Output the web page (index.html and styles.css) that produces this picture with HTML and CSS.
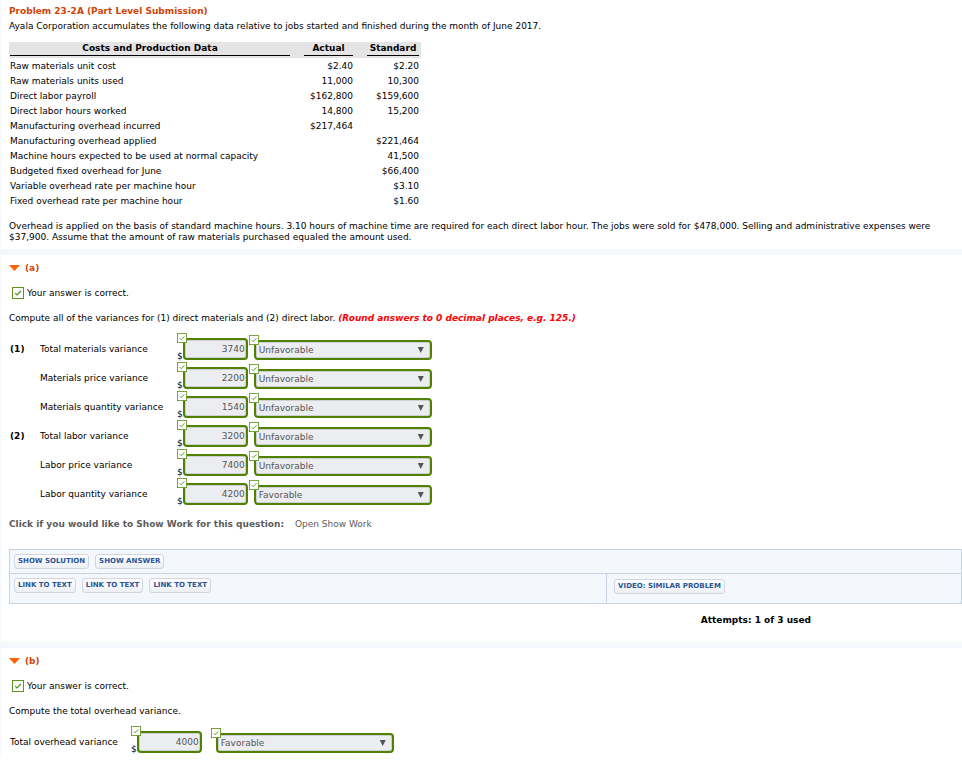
FILE: index.html
```html
<!DOCTYPE html>
<html lang="en">

<head>
    <meta charset="UTF-8">
    <meta name="viewport" content="width=device-width, initial-scale=1.0">
    <title>Problem 23-2A</title>
    <link rel="stylesheet" href="styles.css">
</head>

<body>
    <svg class="sprite" aria-hidden="true">
        <symbol id="check" viewBox="0 0 12 12">
            <rect x="0.5" y="0.5" width="11" height="11" fill="#fff" stroke="#5f9420" />
            <path d="M3.2 6.2 L5 8 L9 4" fill="none" stroke="#4f8f14" stroke-width="1.1" />
        </symbol>
    </svg>

    <section class="problem">
        <h1>Problem 23-2A (Part Level Submission)</h1>
        <p>Ayala Corporation accumulates the following data relative to jobs started and finished during the month of June 2017.</p>

        <table class="costs">
            <thead>
                <tr>
                    <th><span>Costs and Production Data</span></th>
                    <th><span>Actual</span></th>
                    <th><span>Standard</span></th>
                </tr>
            </thead>
            <tbody>
                <tr><td>Raw materials unit cost</td><td>$2.40</td><td>$2.20</td></tr>
                <tr><td>Raw materials units used</td><td>11,000</td><td>10,300</td></tr>
                <tr><td>Direct labor payroll</td><td>$162,800</td><td>$159,600</td></tr>
                <tr><td>Direct labor hours worked</td><td>14,800</td><td>15,200</td></tr>
                <tr><td>Manufacturing overhead incurred</td><td>$217,464</td><td></td></tr>
                <tr><td>Manufacturing overhead applied</td><td></td><td>$221,464</td></tr>
                <tr><td>Machine hours expected to be used at normal capacity</td><td></td><td>41,500</td></tr>
                <tr><td>Budgeted fixed overhead for June</td><td></td><td>$66,400</td></tr>
                <tr><td>Variable overhead rate per machine hour</td><td></td><td>$3.10</td></tr>
                <tr><td>Fixed overhead rate per machine hour</td><td></td><td>$1.60</td></tr>
            </tbody>
        </table>

        <p class="details">Overhead is applied on the basis of standard machine hours. 3.10 hours of machine time are required for each direct labor hour. The jobs were sold for $478,000. Selling and administrative expenses were $37,900. Assume that the amount of raw materials purchased equaled the amount used.</p>
    </section>

    <section class="part">
        <h2><span class="arrow"></span>(a)</h2>
        <p class="status"><svg class="check-big"><use href="#check" /></svg>Your answer is correct.</p>
        <p class="question">Compute all of the variances for (1) direct materials and (2) direct labor. <em>(Round answers to 0 decimal places, e.g. 125.)</em></p>

        <div class="answers">
            <div class="row">
                <b class="num">(1)</b>
                <label class="name" for="a1">Total materials variance</label>
                <span class="amount">$<input type="text" id="a1" value="3740"><svg class="check"><use href="#check" /></svg></span>
                <span class="choice"><select aria-label="Total materials variance type"><option selected>Unfavorable</option><option>Favorable</option></select><svg class="check"><use href="#check" /></svg></span>
            </div>
            <div class="row">
                <b class="num"></b>
                <label class="name" for="a2">Materials price variance</label>
                <span class="amount">$<input type="text" id="a2" value="2200"><svg class="check"><use href="#check" /></svg></span>
                <span class="choice"><select aria-label="Materials price variance type"><option selected>Unfavorable</option><option>Favorable</option></select><svg class="check"><use href="#check" /></svg></span>
            </div>
            <div class="row">
                <b class="num"></b>
                <label class="name" for="a3">Materials quantity variance</label>
                <span class="amount">$<input type="text" id="a3" value="1540"><svg class="check"><use href="#check" /></svg></span>
                <span class="choice"><select aria-label="Materials quantity variance type"><option selected>Unfavorable</option><option>Favorable</option></select><svg class="check"><use href="#check" /></svg></span>
            </div>
            <div class="row">
                <b class="num">(2)</b>
                <label class="name" for="a4">Total labor variance</label>
                <span class="amount">$<input type="text" id="a4" value="3200"><svg class="check"><use href="#check" /></svg></span>
                <span class="choice"><select aria-label="Total labor variance type"><option selected>Unfavorable</option><option>Favorable</option></select><svg class="check"><use href="#check" /></svg></span>
            </div>
            <div class="row">
                <b class="num"></b>
                <label class="name" for="a5">Labor price variance</label>
                <span class="amount">$<input type="text" id="a5" value="7400"><svg class="check"><use href="#check" /></svg></span>
                <span class="choice"><select aria-label="Labor price variance type"><option selected>Unfavorable</option><option>Favorable</option></select><svg class="check"><use href="#check" /></svg></span>
            </div>
            <div class="row">
                <b class="num"></b>
                <label class="name" for="a6">Labor quantity variance</label>
                <span class="amount">$<input type="text" id="a6" value="4200"><svg class="check"><use href="#check" /></svg></span>
                <span class="choice"><select aria-label="Labor quantity variance type"><option>Unfavorable</option><option selected>Favorable</option></select><svg class="check"><use href="#check" /></svg></span>
            </div>
        </div>

        <p class="show-work"><b>Click if you would like to Show Work for this question:</b> <a href="#">Open Show Work</a></p>

        <div class="tools">
            <div class="tools-top">
                <button type="button">Show Solution</button>
                <button type="button">Show Answer</button>
            </div>
            <div class="tools-links">
                <a class="btn" href="#">Link to Text</a>
                <a class="btn" href="#">Link to Text</a>
                <a class="btn" href="#">Link to Text</a>
            </div>
            <div class="tools-video">
                <a class="btn" href="#">Video: Similar Problem</a>
            </div>
        </div>
        <p class="attempts">Attempts: 1 of 3 used</p>
    </section>

    <section class="part">
        <h2><span class="arrow"></span>(b)</h2>
        <p class="status"><svg class="check-big"><use href="#check" /></svg>Your answer is correct.</p>
        <p class="question">Compute the total overhead variance.</p>

        <div class="answers overhead">
            <div class="row">
                <label class="name" for="b1">Total overhead variance</label>
                <span class="amount">$<input type="text" id="b1" value="4000"><svg class="check"><use href="#check" /></svg></span>
                <span class="choice"><select aria-label="Total overhead variance type"><option>Unfavorable</option><option selected>Favorable</option></select><svg class="check"><use href="#check" /></svg></span>
            </div>
        </div>
    </section>
</body>

</html>
```

FILE: styles.css
```css
* {
    box-sizing: border-box;
}

body {
    margin: 0;
    border-left: 1px solid #f4f8fc;
    background-color: #fff;
    color: #000;
    font-family: Verdana, "DejaVu Sans", sans-serif;
    font-size: 9px;
    line-height: 12px;
}

h1,
h2,
p {
    margin: 0;
    font-size: 9px;
}

h1,
h2 {
    color: #d04308;
}

.sprite {
    display: none;
}

.problem {
    padding: 5px 8px 6px;
}

.problem h1 {
    margin-bottom: 3px;
}

.costs {
    margin: 10px 0 13px;
    border-collapse: collapse;
}

.costs th {
    height: 16px;
    padding: 0 1px 2px 13px;
    background-color: #e4e4e4;
    line-height: 13px;
}

.costs th span {
    display: block;
    border-bottom: 1px solid #000;
}

.costs td {
    height: 15px;
    padding: 1px 1px 0 13px;
    line-height: 14px;
    text-align: right;
}

.costs th:first-child,
.costs td:first-child {
    width: 282px;
    padding-left: 1px;
    text-align: left;
}

.costs th:first-child {
    text-align: center;
}

.costs th:nth-child(2) {
    width: 63px;
}

.costs th:last-child,
.costs td:last-child {
    width: 67px;
    padding-right: 2px;
}

.details {
    line-height: 11px;
}

.part {
    padding: 7px 0 0 8px;
    border-top: 6px solid #f4f8fc;
}

.part h2 {
    display: flex;
    align-items: center;
    gap: 5px;
}

.arrow {
    width: 11px;
    height: 6px;
    background-color: #ff6200;
    clip-path: polygon(0 0, 100% 0, 50% 100%);
}

.status {
    display: flex;
    align-items: center;
    gap: 3px;
    margin: 13px 0;
    padding-left: 3px;
}

.check-big {
    width: 12px;
    height: 12px;
}

.question em {
    color: #f00;
    font-weight: bold;
}

.answers {
    margin-top: 10px;
}

.row {
    display: flex;
    height: 29px;
    line-height: 30px;
}

.num {
    width: 31px;
    padding-left: 1px;
}

.name {
    width: 137px;
}

.amount,
.choice {
    position: relative;
    display: flex;
    align-items: flex-end;
    padding-bottom: 3px;
    line-height: 8px;
}

.amount input,
.choice select {
    border: 2px solid #508200;
    border-radius: 4px;
    background-color: #ecedf0;
    box-shadow: inset 0 0 0 1px #cfd0d4;
    color: #555;
    font-family: inherit;
    font-size: 9px;
}

.amount input {
    width: 65px;
    height: 22px;
    padding: 0 1px;
    text-align: right;
}

.choice {
    margin-left: 6px;
}

.choice select {
    width: 178px;
    height: 20px;
    padding: 0 3px;
    appearance: none;
}

.choice::after {
    content: "";
    position: absolute;
    right: 8px;
    bottom: 10px;
    width: 6px;
    height: 6px;
    background-color: #555;
    clip-path: polygon(0 0, 100% 0, 50% 100%);
    pointer-events: none;
}

.check {
    position: absolute;
    top: -1px;
    left: 0;
    width: 10px;
    height: 10px;
}

.choice .check {
    top: 1px;
    left: -5px;
}

.overhead .name {
    width: 122px;
    padding-left: 1px;
}

.overhead .choice {
    margin-left: 14px;
}

.show-work {
    margin: 10px 0 19px;
    color: #5c5c5c;
}

.show-work a {
    margin-left: 8px;
    color: #5c5c5c;
    text-decoration: none;
}

.tools {
    display: grid;
    grid-template-columns: 598fr 356fr;
    border: 1px solid #c9d2e0;
    background-color: #f4f8fc;
}

.tools-top,
.tools-links,
.tools-video {
    display: flex;
    align-items: flex-start;
    gap: 6px;
    padding: 4px;
}

.tools-top {
    grid-column: 1 / 3;
    border-bottom: 1px solid #c9d2e0;
}

.tools-video {
    padding: 5px 7px 9px;
    border-left: 1px solid #c9d2e0;
}

.tools button,
.btn {
    height: 15px;
    padding: 0 3px;
    border: 1px solid #cfd6e0;
    border-radius: 3px;
    background: linear-gradient(#fff, #eceff3);
    color: #2a5596;
    font-family: Verdana, "DejaVu Sans", sans-serif;
    font-size: 7px;
    font-weight: bold;
    line-height: 13px;
    text-decoration: none;
    text-transform: uppercase;
}

.attempts {
    margin: 10px 0 16px;
    padding-right: 151px;
    font-weight: bold;
    text-align: right;
}
```
